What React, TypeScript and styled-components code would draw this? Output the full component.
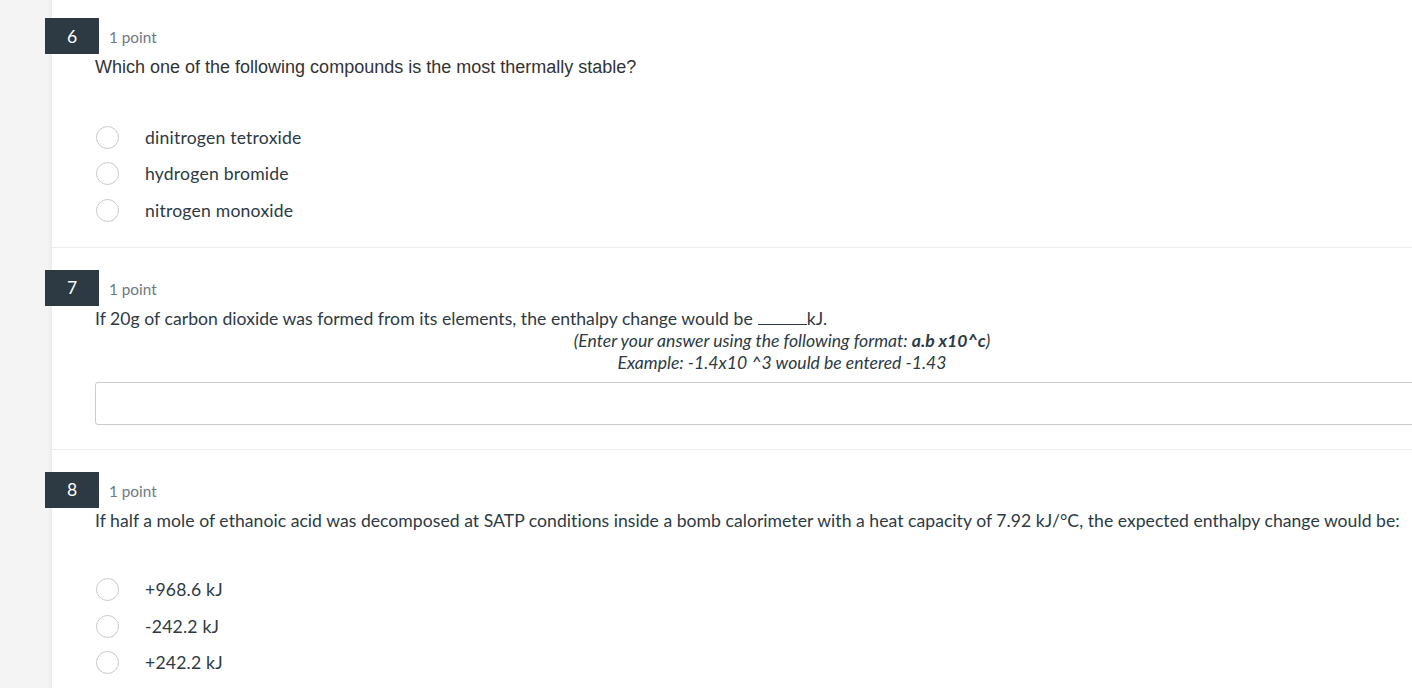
import React from "react";
import styled, { createGlobalStyle } from "styled-components";

const GlobalStyle = createGlobalStyle`
  html, body {
    margin: 0;
    padding: 0;
    background: #ffffff;
    overflow: hidden;
  }
`;

const Page = styled.div`
  display: flex;
  min-height: 688px;
  width: 1520px;
`;

const Sidebar = styled.div`
  width: 52px;
  flex: none;
  background: #f4f4f4;
  box-shadow: inset -5px 0 5px -4px rgba(0, 0, 0, 0.06);
`;

const Main = styled.main`
  flex: 1;
  background: #fff;
`;

const Question = styled.section<{ $bottom: number }>`
  padding: 22px 0 ${(p) => p.$bottom}px 43px;
  border-bottom: 1px solid #ececec;
  &:first-child {
    padding-top: 18px;
  }
  &:last-child {
    border-bottom: none;
  }
`;

const Header = styled.div`
  display: flex;
  align-items: center;
  gap: 10px;
  margin-left: -50px;
  height: 36px;
`;

const Badge = styled.div`
  width: 54px;
  height: 36px;
  background: #2d3a43;
  color: #fff;
  display: flex;
  align-items: center;
  justify-content: center;
  font-family: Lato, "Open Sans", sans-serif;
  font-size: 17.6px;
`;

const Points = styled.span`
  font-family: Lato, "Open Sans", sans-serif;
  font-size: 15.3px;
  color: #6f7a82;
  padding-top: 2px;
`;

const Prompt = styled.div<{ $arial?: boolean }>`
  width: 1374px;
  font-family: ${(p) => (p.$arial ? '"Liberation Sans", Arial' : 'Lato, "Open Sans"')}, sans-serif;
  font-size: ${(p) => (p.$arial ? "18px" : "17.6px")};
  letter-spacing: ${(p) => (p.$arial ? "0" : "0.03px")};
  line-height: 24px;
  color: ${(p) => (p.$arial ? "#333" : "#2d3a43")};
`;

const Note = styled.div`
  width: 1374px;
  text-align: center;
  font-family: Lato, "Open Sans", sans-serif;
  font-style: italic;
  font-size: 17.6px;
  line-height: 22px;
  color: #2d3a43;
`;

const Blank = styled.span`
  display: inline-block;
  width: 49px;
  border-bottom: 1.5px solid #2d3a43;
  height: 15px;
  margin-left: 5px;
`;

const Answer = styled.input`
  display: block;
  box-sizing: border-box;
  width: 1374px;
  height: 43px;
  margin-top: 8px;
  border: 1px solid #c9cdd1;
  border-radius: 3px;
  background: #fff;
  outline: none;
`;

const Options = styled.div<{ $top: number }>`
  margin-top: ${(p) => p.$top}px;
  display: flex;
  flex-direction: column;
`;

const Option = styled.label`
  display: flex;
  align-items: center;
  height: 36.5px;
  gap: 26px;
  font-family: Lato, "Open Sans", sans-serif;
  font-size: 17.6px;
  letter-spacing: 0.2px;
  color: #2d3a43;
`;

const Radio = styled.span`
  box-sizing: border-box;
  width: 23px;
  height: 23px;
  border-radius: 50%;
  border: 1px solid #c6cacd;
  background: #fff;
  margin-left: 1px;
`;

export default function App() {
  return (
    <>
      <GlobalStyle />
      <Page>
        <Sidebar />
        <Main>
          <Question $bottom={18}>
            <Header>
              <Badge>6</Badge>
              <Points>1 point</Points>
            </Header>
            <Prompt $arial style={{ marginTop: 1 }}>
              Which one of the following compounds is the most thermally stable?
            </Prompt>
            <Options $top={40}>
              {["dinitrogen tetroxide", "hydrogen bromide", "nitrogen monoxide"].map((o) => (
                <Option key={o}>
                  <Radio />
                  {o}
                </Option>
              ))}
            </Options>
          </Question>
          <Question $bottom={24}>
            <Header>
              <Badge>7</Badge>
              <Points>1 point</Points>
            </Header>
            <Prompt style={{ lineHeight: "22px", marginTop: 2 }}>
              If 20g of carbon dioxide was formed from its elements, the enthalpy change would be
              <Blank />
              kJ.
            </Prompt>
            <Note>
              (Enter your answer using the following format: <b>a.b x10^c</b>)
            </Note>
            <Note>Example: -1.4x10 ^3 would be entered -1.43</Note>
            <Answer />
          </Question>
          <Question $bottom={10}>
            <Header>
              <Badge>8</Badge>
              <Points>1 point</Points>
            </Header>
            <Prompt style={{ marginTop: 1 }}>
              If half a mole of ethanoic acid was decomposed at SATP conditions inside a bomb
              calorimeter with a heat capacity of 7.92 kJ/°C, the expected enthalpy change would be:
            </Prompt>
            <Options $top={39}>
              {["+968.6 kJ", "-242.2 kJ", "+242.2 kJ"].map((o) => (
                <Option key={o}>
                  <Radio />
                  {o}
                </Option>
              ))}
            </Options>
          </Question>
        </Main>
      </Page>
    </>
  );
}
